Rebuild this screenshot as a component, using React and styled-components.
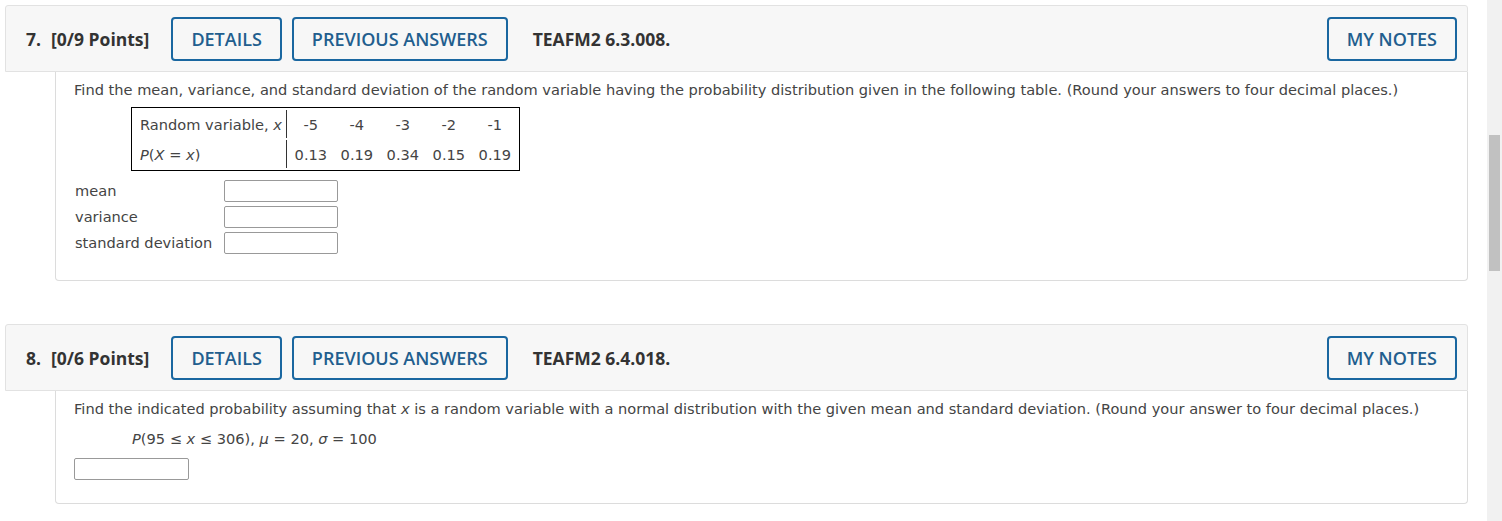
import React from 'react';
import styled, { createGlobalStyle } from 'styled-components';

const Global = createGlobalStyle`
  html, body {
    margin: 0;
    padding: 0;
    background: #ffffff;
    overflow: hidden;
  }
  body {
    font-family: "DejaVu Sans", Verdana, sans-serif;
    color: #444;
  }
`;

const Page = styled.div`
  width: 1468px;
  padding: 5px 0 0 5px;
  box-sizing: border-box;
  display: flex;
  flex-direction: column;
  gap: 43px;
`;

const Question = styled.section`
  display: flex;
  flex-direction: column;
`;

const Header = styled.div`
  height: 67px;
  box-sizing: border-box;
  display: flex;
  align-items: center;
  padding: 0 10px 0 20px;
  background: #f7f7f7;
  border: 1px solid #e2e2e2;
  border-radius: 3px 3px 0 0;
  font-family: "Open Sans", "Noto Sans", sans-serif;
  font-weight: 700;
  font-size: 17.5px;
  color: #333;
`;

const Number = styled.span`
  margin-right: 10px;
`;

const Points = styled.span`
  margin-right: 22px;
`;

const HeadButton = styled.button`
  height: 44px;
  box-sizing: border-box;
  padding: 0 18px;
  margin-right: ${p => p.$gap ?? 10}px;
  margin-left: ${p => (p.$right ? 'auto' : '0')};
  background: #f7f7f7;
  border: 2px solid #1a67a0;
  border-radius: 4px;
  font-family: "Open Sans", "Noto Sans", sans-serif;
  font-weight: 600;
  font-size: 18px;
  color: #225e8e;
  cursor: pointer;
`;

const Code = styled.span`
  margin-left: 15px;
`;

const Body = styled.div`
  margin-left: 50px;
  min-height: ${p => p.$h}px;
  box-sizing: border-box;
  padding: 8px 18px 0 18px;
  border: 1px solid #dcdcdc;
  border-top: none;
  border-radius: 0 0 4px 4px;
  font-size: 14.6px;
  color: #444;
`;

const Prompt = styled.p`
  margin: 0 0 8px 0;
  line-height: 19px;
`;

const Dist = styled.table`
  margin-left: 57px;
  border: 1px solid #000;
  border-spacing: 2px;
  font-size: 14.6px;
  color: #444;
`;

const Cell = styled.td`
  height: 28px;
  padding: 0 ${p => (p.$label ? '4px 0 6px' : '4px')};
  text-align: ${p => (p.$label ? 'left' : 'center')};
  border-right: ${p => (p.$label ? '1px solid #333' : 'none')};
  min-width: ${p => (p.$label ? '0' : '36px')};
  white-space: nowrap;
`;

const AnswerGrid = styled.div`
  display: grid;
  grid-template-columns: 149px 114px;
  row-gap: 4px;
  margin-top: 9px;
  padding-left: 1px;
  align-items: center;
`;

const Label = styled.span`
  line-height: 22px;
`;

const Box = styled.input`
  width: ${p => p.$w || 114}px;
  height: 22px;
  box-sizing: border-box;
  border: 1px solid #999;
  border-radius: 2px;
  background: #fff;
  margin: 0;
  padding: 0;
`;

const Formula = styled.div`
  margin: 11px 0 10px 58px;
  line-height: 19px;
`;

const Scrollbar = styled.div`
  position: fixed;
  top: 0;
  right: 0;
  width: 15px;
  height: 100%;
  background: #f1f1f1;
`;

const Thumb = styled.div`
  position: absolute;
  top: 135px;
  left: 2px;
  width: 11px;
  height: 136px;
  background: #c1c1c1;
`;

function QHeader({ n, pts, code }) {
  return (
    <Header>
      <Number>{n}.</Number>
      <Points>[{pts} Points]</Points>
      <HeadButton>DETAILS</HeadButton>
      <HeadButton>PREVIOUS ANSWERS</HeadButton>
      <Code>{code}</Code>
      <HeadButton $right $gap={0}>MY NOTES</HeadButton>
    </Header>
  );
}

const xs = ['-5', '-4', '-3', '-2', '-1'];
const ps = ['0.13', '0.19', '0.34', '0.15', '0.19'];

export default function App() {
  return (
    <>
      <Global />
      <Page>
        <Question>
          <QHeader n={7} pts="0/9" code="TEAFM2 6.3.008." />
          <Body $h={209}>
            <Prompt>
              Find the mean, variance, and standard deviation of the random variable having the probability distribution given in the following table. (Round your answers to four decimal places.)
            </Prompt>
            <Dist>
              <tbody>
                <tr>
                  <Cell $label>Random variable, <i>x</i></Cell>
                  {xs.map((v, i) => <Cell key={i}>{v}</Cell>)}
                </tr>
                <tr>
                  <Cell $label><i>P</i>(<i>X</i> = <i>x</i>)</Cell>
                  {ps.map((v, i) => <Cell key={i}>{v}</Cell>)}
                </tr>
              </tbody>
            </Dist>
            <AnswerGrid>
              <Label>mean</Label>
              <Box />
              <Label>variance</Label>
              <Box />
              <Label>standard deviation</Label>
              <Box />
            </AnswerGrid>
          </Body>
        </Question>
        <Question>
          <QHeader n={8} pts="0/6" code="TEAFM2 6.4.018." />
          <Body $h={113}>
            <Prompt>
              Find the indicated probability assuming that <i>x</i> is a random variable with a normal distribution with the given mean and standard deviation. (Round your answer to four decimal places.)
            </Prompt>
            <Formula>
              <i>P</i>(95 ≤ <i>x</i> ≤ 306), <i>μ</i> = 20, <i>σ</i> = 100
            </Formula>
            <Box $w={115} />
          </Body>
        </Question>
      </Page>
      <Scrollbar>
        <Thumb />
      </Scrollbar>
    </>
  );
}
